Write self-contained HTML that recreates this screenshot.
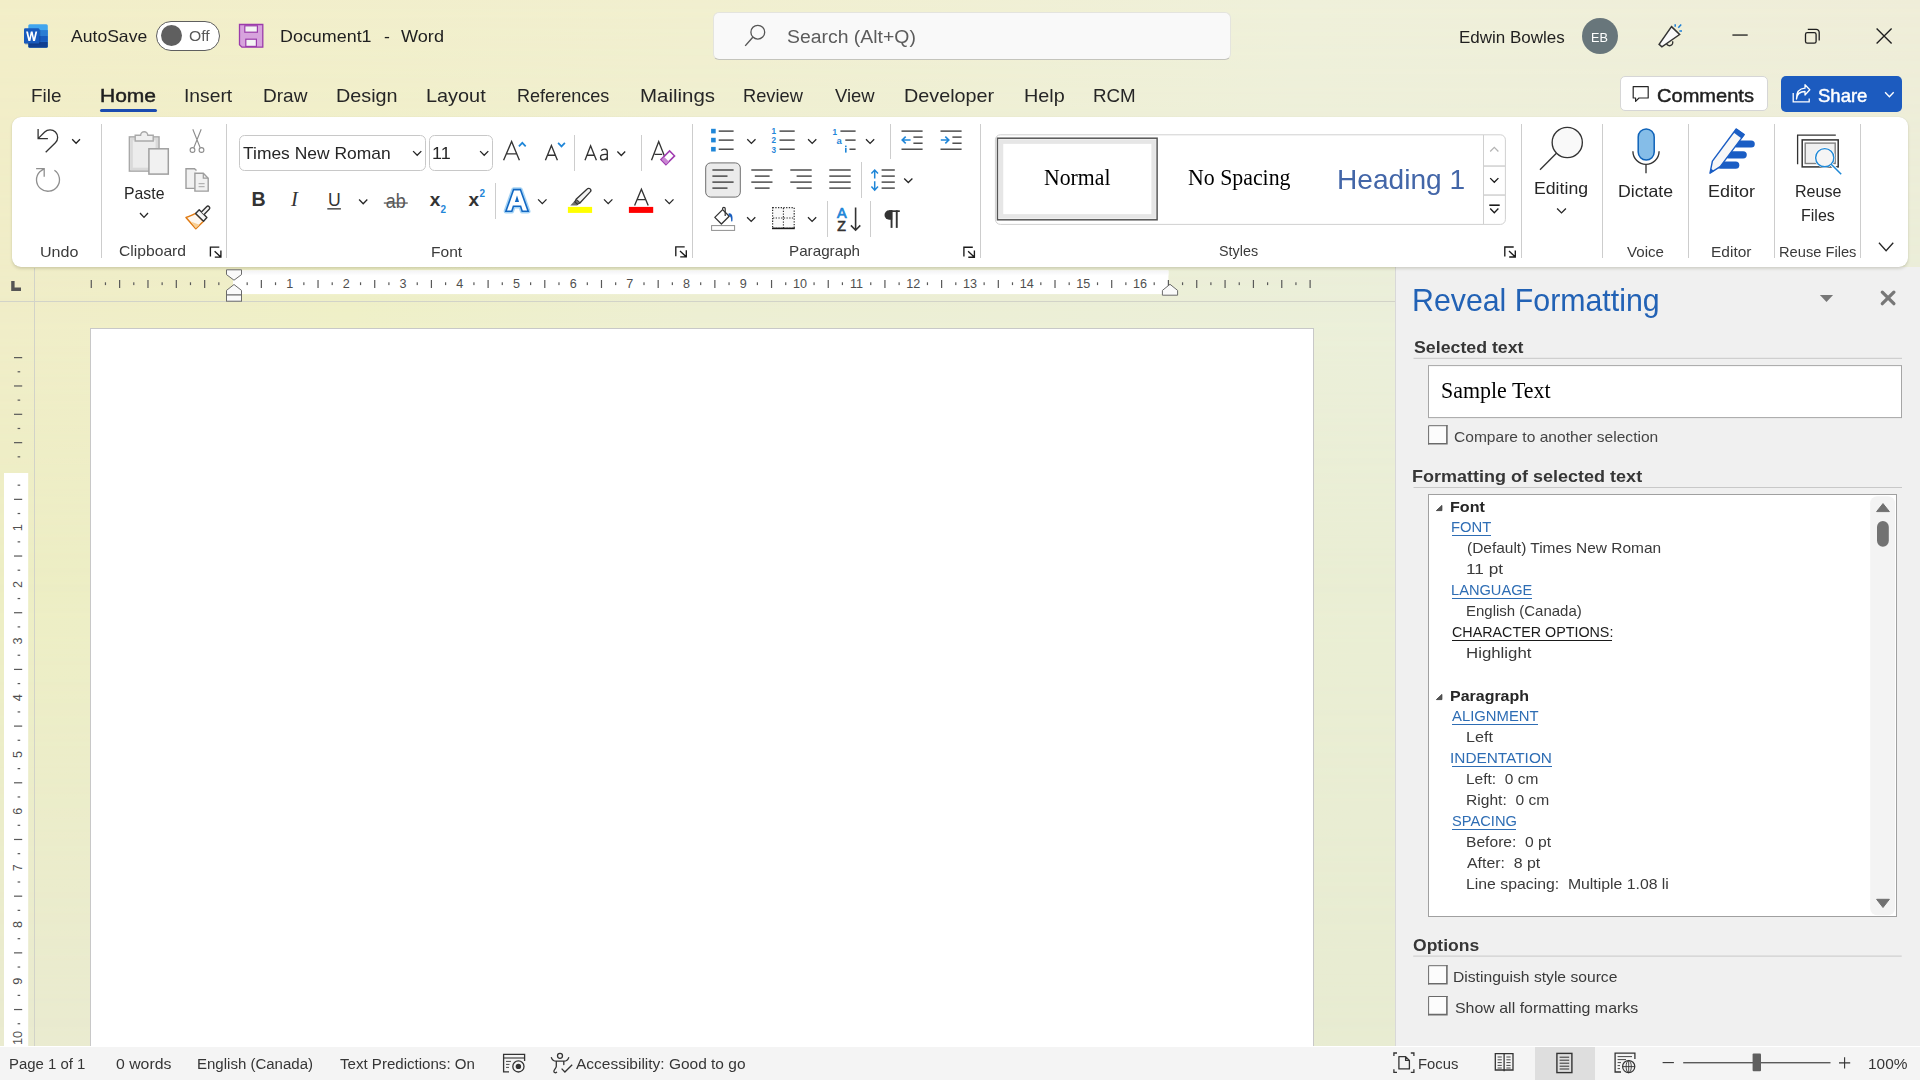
<!DOCTYPE html>
<html><head><meta charset="utf-8"><title>Document1 - Word</title>
<style>
html,body{margin:0;padding:0;width:1920px;height:1080px;overflow:hidden;}
body{position:relative;font-family:"Liberation Sans",sans-serif;
background:linear-gradient(100deg,#f2eec8 0%,#f0efd6 55%,#eeedd9 100%);}
.t{position:absolute;white-space:pre;transform-origin:0 0;}
.abs{position:absolute;}
svg{position:absolute;overflow:visible;}
</style></head><body>
<div class=abs style="left:0;top:0;width:1920px;height:1080px;background:linear-gradient(90deg,#eaebd0 0px,#e9ebd1 700px,#e8ecd2 1360px,#e8ebd2 1920px)"></div>
<div class=abs style="left:0;top:0;width:1920px;height:1080px;background:linear-gradient(90deg,#edeec4 0px,#eceecc 700px,#eaeed4 1360px,#eaeed6 1920px);-webkit-mask-image:linear-gradient(180deg,#000 0px,#000 600px,transparent 1040px)"></div>
<div class=abs style="left:0;top:0;width:1920px;height:1080px;background:linear-gradient(90deg,#f0edc8 0px,#eff0c8 350px,#edefd3 700px,#ebefda 1395px,#ebeed9 1920px);-webkit-mask-image:linear-gradient(180deg,#000 0px,#000 315px,transparent 600px)"></div>
<div class=abs style="left:0;top:0;width:1920px;height:1080px;background:linear-gradient(90deg,#f2eec8 0px,#f1efcf 700px,#eff0da 1300px,#efedd8 1920px);-webkit-mask-image:linear-gradient(180deg,#000 0px,transparent 315px)"></div>
<!-- search box -->
<div class=abs style="left:713px;top:12px;width:518px;height:48px;box-sizing:border-box;background:#f9f9f9;border:1px solid #e4e4de;border-bottom:1.5px solid #c4c4bc;border-radius:6px;"></div>
<!-- avatar -->
<div class=abs style="left:1582px;top:18px;width:36px;height:36px;border-radius:50%;background:#68767b"></div>
<!-- toggle -->
<div class=abs style="left:156px;top:21px;width:64px;height:30px;box-sizing:border-box;border:1px solid #5f5f5f;border-radius:15px;background:#ffffff"></div>
<div class=abs style="left:161px;top:25px;width:21px;height:21px;border-radius:50%;background:#5f5f5f"></div>
<!-- home underline -->
<div class=abs style="left:100px;top:109px;width:57px;height:3px;border-radius:2px;background:#1a4bb0"></div>
<!-- comments / share buttons -->
<div class=abs style="left:1620px;top:76px;width:148px;height:35px;box-sizing:border-box;background:#fff;border:1px solid #d6d6d6;border-radius:5px"></div>
<div class=abs style="left:1781px;top:76px;width:121px;height:36px;background:#1c5bbf;border-radius:5px"></div>
<!-- doc area lines -->
<div class=abs style="left:34px;top:268px;width:1px;height:778px;background:#d2d3c8"></div>
<div class=abs style="left:0px;top:301px;width:1395px;height:1px;background:#d2d3c8"></div>
<!-- page -->
<div class=abs style="left:90px;top:328px;width:1224px;height:720px;box-sizing:border-box;background:#fff;border:1px solid #c8c8c8;border-bottom:none"></div>
<!-- pane -->
<div class=abs style="left:1395px;top:267px;width:525px;height:779px;background:#f0f0f0;border-left:1px solid #d8d8d8;box-sizing:border-box"></div>
<!-- status bar -->
<div class=abs style="left:0;top:1046px;width:1920px;height:34px;background:#f4f4f4;border-top:1px solid #ffffff;box-sizing:border-box"></div>
<!-- ribbon -->
<div class=abs style="left:12px;top:117px;width:1896px;height:150px;background:#ffffff;border-radius:9px;box-shadow:0 2px 3px rgba(60,60,20,0.16),0 0 1px rgba(0,0,0,0.12)"></div>
<svg width="1920" height="1080" viewBox="0 0 1920 1080" style="left:0;top:0"><defs><linearGradient id="rg" x1="0" y1="0" x2="0" y2="1"><stop offset="0" stop-color="#f3f3f5"/><stop offset="1" stop-color="#ffffff"/></linearGradient></defs><rect x="233" y="270.5" width="935.4" height="23.6" fill="#ffffff"/>
<rect x="233" y="270.5" width="935.4" height="5" fill="url(#rg)"/>
<rect x="90.68" y="280" width="1.2" height="8" fill="#595959"/>
<rect x="104.85" y="282.3" width="1.2" height="2.8" fill="#595959"/>
<rect x="119.02" y="280" width="1.2" height="8" fill="#595959"/>
<rect x="133.19" y="282.3" width="1.2" height="2.8" fill="#595959"/>
<rect x="147.37" y="280" width="1.2" height="8" fill="#595959"/>
<rect x="161.54" y="282.3" width="1.2" height="2.8" fill="#595959"/>
<rect x="175.71" y="280" width="1.2" height="8" fill="#595959"/>
<rect x="189.88" y="282.3" width="1.2" height="2.8" fill="#595959"/>
<rect x="204.06" y="280" width="1.2" height="8" fill="#595959"/>
<rect x="218.23" y="282.3" width="1.2" height="2.8" fill="#595959"/>
<rect x="246.57" y="282.3" width="1.2" height="2.8" fill="#595959"/>
<rect x="260.75" y="280" width="1.2" height="8" fill="#595959"/>
<rect x="274.92" y="282.3" width="1.2" height="2.8" fill="#595959"/>
<text x="289.69" y="288.2" text-anchor="middle" font-family="Liberation Sans" font-size="12.6" fill="#4f4f4f">1</text>
<rect x="303.26" y="282.3" width="1.2" height="2.8" fill="#595959"/>
<rect x="317.43" y="280" width="1.2" height="8" fill="#595959"/>
<rect x="331.61" y="282.3" width="1.2" height="2.8" fill="#595959"/>
<text x="346.38" y="288.2" text-anchor="middle" font-family="Liberation Sans" font-size="12.6" fill="#4f4f4f">2</text>
<rect x="359.95" y="282.3" width="1.2" height="2.8" fill="#595959"/>
<rect x="374.12" y="280" width="1.2" height="8" fill="#595959"/>
<rect x="388.30" y="282.3" width="1.2" height="2.8" fill="#595959"/>
<text x="403.07" y="288.2" text-anchor="middle" font-family="Liberation Sans" font-size="12.6" fill="#4f4f4f">3</text>
<rect x="416.64" y="282.3" width="1.2" height="2.8" fill="#595959"/>
<rect x="430.81" y="280" width="1.2" height="8" fill="#595959"/>
<rect x="444.99" y="282.3" width="1.2" height="2.8" fill="#595959"/>
<text x="459.76" y="288.2" text-anchor="middle" font-family="Liberation Sans" font-size="12.6" fill="#4f4f4f">4</text>
<rect x="473.33" y="282.3" width="1.2" height="2.8" fill="#595959"/>
<rect x="487.50" y="280" width="1.2" height="8" fill="#595959"/>
<rect x="501.68" y="282.3" width="1.2" height="2.8" fill="#595959"/>
<text x="516.45" y="288.2" text-anchor="middle" font-family="Liberation Sans" font-size="12.6" fill="#4f4f4f">5</text>
<rect x="530.02" y="282.3" width="1.2" height="2.8" fill="#595959"/>
<rect x="544.19" y="280" width="1.2" height="8" fill="#595959"/>
<rect x="558.37" y="282.3" width="1.2" height="2.8" fill="#595959"/>
<text x="573.14" y="288.2" text-anchor="middle" font-family="Liberation Sans" font-size="12.6" fill="#4f4f4f">6</text>
<rect x="586.71" y="282.3" width="1.2" height="2.8" fill="#595959"/>
<rect x="600.88" y="280" width="1.2" height="8" fill="#595959"/>
<rect x="615.06" y="282.3" width="1.2" height="2.8" fill="#595959"/>
<text x="629.83" y="288.2" text-anchor="middle" font-family="Liberation Sans" font-size="12.6" fill="#4f4f4f">7</text>
<rect x="643.40" y="282.3" width="1.2" height="2.8" fill="#595959"/>
<rect x="657.57" y="280" width="1.2" height="8" fill="#595959"/>
<rect x="671.75" y="282.3" width="1.2" height="2.8" fill="#595959"/>
<text x="686.52" y="288.2" text-anchor="middle" font-family="Liberation Sans" font-size="12.6" fill="#4f4f4f">8</text>
<rect x="700.09" y="282.3" width="1.2" height="2.8" fill="#595959"/>
<rect x="714.26" y="280" width="1.2" height="8" fill="#595959"/>
<rect x="728.44" y="282.3" width="1.2" height="2.8" fill="#595959"/>
<text x="743.21" y="288.2" text-anchor="middle" font-family="Liberation Sans" font-size="12.6" fill="#4f4f4f">9</text>
<rect x="756.78" y="282.3" width="1.2" height="2.8" fill="#595959"/>
<rect x="770.95" y="280" width="1.2" height="8" fill="#595959"/>
<rect x="785.13" y="282.3" width="1.2" height="2.8" fill="#595959"/>
<text x="799.90" y="288.2" text-anchor="middle" font-family="Liberation Sans" font-size="12.6" fill="#4f4f4f">10</text>
<rect x="813.47" y="282.3" width="1.2" height="2.8" fill="#595959"/>
<rect x="827.64" y="280" width="1.2" height="8" fill="#595959"/>
<rect x="841.82" y="282.3" width="1.2" height="2.8" fill="#595959"/>
<text x="856.59" y="288.2" text-anchor="middle" font-family="Liberation Sans" font-size="12.6" fill="#4f4f4f">11</text>
<rect x="870.16" y="282.3" width="1.2" height="2.8" fill="#595959"/>
<rect x="884.33" y="280" width="1.2" height="8" fill="#595959"/>
<rect x="898.51" y="282.3" width="1.2" height="2.8" fill="#595959"/>
<text x="913.28" y="288.2" text-anchor="middle" font-family="Liberation Sans" font-size="12.6" fill="#4f4f4f">12</text>
<rect x="926.85" y="282.3" width="1.2" height="2.8" fill="#595959"/>
<rect x="941.02" y="280" width="1.2" height="8" fill="#595959"/>
<rect x="955.20" y="282.3" width="1.2" height="2.8" fill="#595959"/>
<text x="969.97" y="288.2" text-anchor="middle" font-family="Liberation Sans" font-size="12.6" fill="#4f4f4f">13</text>
<rect x="983.54" y="282.3" width="1.2" height="2.8" fill="#595959"/>
<rect x="997.71" y="280" width="1.2" height="8" fill="#595959"/>
<rect x="1011.89" y="282.3" width="1.2" height="2.8" fill="#595959"/>
<text x="1026.66" y="288.2" text-anchor="middle" font-family="Liberation Sans" font-size="12.6" fill="#4f4f4f">14</text>
<rect x="1040.23" y="282.3" width="1.2" height="2.8" fill="#595959"/>
<rect x="1054.41" y="280" width="1.2" height="8" fill="#595959"/>
<rect x="1068.58" y="282.3" width="1.2" height="2.8" fill="#595959"/>
<text x="1083.35" y="288.2" text-anchor="middle" font-family="Liberation Sans" font-size="12.6" fill="#4f4f4f">15</text>
<rect x="1096.92" y="282.3" width="1.2" height="2.8" fill="#595959"/>
<rect x="1111.10" y="280" width="1.2" height="8" fill="#595959"/>
<rect x="1125.27" y="282.3" width="1.2" height="2.8" fill="#595959"/>
<text x="1140.04" y="288.2" text-anchor="middle" font-family="Liberation Sans" font-size="12.6" fill="#4f4f4f">16</text>
<rect x="1153.61" y="282.3" width="1.2" height="2.8" fill="#595959"/>
<rect x="1167.79" y="280" width="1.2" height="8" fill="#595959"/>
<rect x="1181.96" y="282.3" width="1.2" height="2.8" fill="#595959"/>
<rect x="1196.13" y="280" width="1.2" height="8" fill="#595959"/>
<rect x="1210.30" y="282.3" width="1.2" height="2.8" fill="#595959"/>
<rect x="1224.47" y="280" width="1.2" height="8" fill="#595959"/>
<rect x="1238.65" y="282.3" width="1.2" height="2.8" fill="#595959"/>
<rect x="1252.82" y="280" width="1.2" height="8" fill="#595959"/>
<rect x="1266.99" y="282.3" width="1.2" height="2.8" fill="#595959"/>
<rect x="1281.16" y="280" width="1.2" height="8" fill="#595959"/>
<rect x="1295.34" y="282.3" width="1.2" height="2.8" fill="#595959"/>
<rect x="1309.51" y="280" width="1.2" height="8" fill="#595959"/>
<path d="M11.2,281 H14.6 V287.6 H21 V291 H11.2Z" fill="#555"/>
<path d="M226.5,269.8 H241.5 V274.6 L234,280.2 L226.5,274.6Z" fill="#fafafa" stroke="#6b6b6b" stroke-width="1"/>
<path d="M234,284.5 L241.5,290.4 V295 H226.5 V290.4Z" fill="#fafafa" stroke="#6b6b6b" stroke-width="1"/>
<rect x="226.5" y="295" width="15" height="6.2" fill="#fafafa" stroke="#6b6b6b" stroke-width="1"/>
<path d="M1170,284.3 L1177.6,290.4 V295.2 H1162.4 V290.4Z" fill="#fafafa" stroke="#6b6b6b" stroke-width="1"/>
<rect x="4" y="473" width="24.2" height="573" fill="#ffffff"/>
<rect x="14" y="357.02" width="8.2" height="1.2" fill="#595959"/>
<rect x="17.6" y="371.19" width="2.6" height="1.2" fill="#595959"/>
<rect x="14" y="385.37" width="8.2" height="1.2" fill="#595959"/>
<rect x="17.6" y="399.54" width="2.6" height="1.2" fill="#595959"/>
<rect x="14" y="413.71" width="8.2" height="1.2" fill="#595959"/>
<rect x="17.6" y="427.88" width="2.6" height="1.2" fill="#595959"/>
<rect x="14" y="442.05" width="8.2" height="1.2" fill="#595959"/>
<rect x="17.6" y="456.23" width="2.6" height="1.2" fill="#595959"/>
<rect x="17.6" y="484.57" width="2.6" height="1.2" fill="#595959"/>
<rect x="14" y="498.75" width="8.2" height="1.2" fill="#595959"/>
<rect x="17.6" y="512.92" width="2.6" height="1.2" fill="#595959"/>
<text x="0" y="0" text-anchor="middle" font-family="Liberation Sans" font-size="12.6" fill="#4f4f4f" transform="translate(22.2 527.69) rotate(-90)">1</text>
<rect x="17.6" y="541.26" width="2.6" height="1.2" fill="#595959"/>
<rect x="14" y="555.43" width="8.2" height="1.2" fill="#595959"/>
<rect x="17.6" y="569.61" width="2.6" height="1.2" fill="#595959"/>
<text x="0" y="0" text-anchor="middle" font-family="Liberation Sans" font-size="12.6" fill="#4f4f4f" transform="translate(22.2 584.38) rotate(-90)">2</text>
<rect x="17.6" y="597.95" width="2.6" height="1.2" fill="#595959"/>
<rect x="14" y="612.12" width="8.2" height="1.2" fill="#595959"/>
<rect x="17.6" y="626.30" width="2.6" height="1.2" fill="#595959"/>
<text x="0" y="0" text-anchor="middle" font-family="Liberation Sans" font-size="12.6" fill="#4f4f4f" transform="translate(22.2 641.07) rotate(-90)">3</text>
<rect x="17.6" y="654.64" width="2.6" height="1.2" fill="#595959"/>
<rect x="14" y="668.81" width="8.2" height="1.2" fill="#595959"/>
<rect x="17.6" y="682.99" width="2.6" height="1.2" fill="#595959"/>
<text x="0" y="0" text-anchor="middle" font-family="Liberation Sans" font-size="12.6" fill="#4f4f4f" transform="translate(22.2 697.76) rotate(-90)">4</text>
<rect x="17.6" y="711.33" width="2.6" height="1.2" fill="#595959"/>
<rect x="14" y="725.50" width="8.2" height="1.2" fill="#595959"/>
<rect x="17.6" y="739.68" width="2.6" height="1.2" fill="#595959"/>
<text x="0" y="0" text-anchor="middle" font-family="Liberation Sans" font-size="12.6" fill="#4f4f4f" transform="translate(22.2 754.45) rotate(-90)">5</text>
<rect x="17.6" y="768.02" width="2.6" height="1.2" fill="#595959"/>
<rect x="14" y="782.19" width="8.2" height="1.2" fill="#595959"/>
<rect x="17.6" y="796.37" width="2.6" height="1.2" fill="#595959"/>
<text x="0" y="0" text-anchor="middle" font-family="Liberation Sans" font-size="12.6" fill="#4f4f4f" transform="translate(22.2 811.14) rotate(-90)">6</text>
<rect x="17.6" y="824.71" width="2.6" height="1.2" fill="#595959"/>
<rect x="14" y="838.88" width="8.2" height="1.2" fill="#595959"/>
<rect x="17.6" y="853.06" width="2.6" height="1.2" fill="#595959"/>
<text x="0" y="0" text-anchor="middle" font-family="Liberation Sans" font-size="12.6" fill="#4f4f4f" transform="translate(22.2 867.83) rotate(-90)">7</text>
<rect x="17.6" y="881.40" width="2.6" height="1.2" fill="#595959"/>
<rect x="14" y="895.57" width="8.2" height="1.2" fill="#595959"/>
<rect x="17.6" y="909.75" width="2.6" height="1.2" fill="#595959"/>
<text x="0" y="0" text-anchor="middle" font-family="Liberation Sans" font-size="12.6" fill="#4f4f4f" transform="translate(22.2 924.52) rotate(-90)">8</text>
<rect x="17.6" y="938.09" width="2.6" height="1.2" fill="#595959"/>
<rect x="14" y="952.26" width="8.2" height="1.2" fill="#595959"/>
<rect x="17.6" y="966.44" width="2.6" height="1.2" fill="#595959"/>
<text x="0" y="0" text-anchor="middle" font-family="Liberation Sans" font-size="12.6" fill="#4f4f4f" transform="translate(22.2 981.21) rotate(-90)">9</text>
<rect x="17.6" y="994.78" width="2.6" height="1.2" fill="#595959"/>
<rect x="14" y="1008.95" width="8.2" height="1.2" fill="#595959"/>
<rect x="17.6" y="1023.13" width="2.6" height="1.2" fill="#595959"/>
<text x="0" y="0" text-anchor="middle" font-family="Liberation Sans" font-size="12.6" fill="#4f4f4f" transform="translate(22.2 1037.90) rotate(-90)">10</text></svg>
<svg width="1920" height="1080" viewBox="0 0 1920 1080" style="left:0;top:0"><rect x="28.3" y="24.2" width="19.5" height="23.5" rx="1.5" fill="#41a5ee"/>
<rect x="28.3" y="30.1" width="19.5" height="5.9" fill="#2b7cd3"/>
<rect x="28.3" y="36" width="19.5" height="5.9" fill="#185abd"/>
<path d="M28.3,41.9 H47.8 V46.2 a1.5,1.5 0 0 1 -1.5,1.5 H29.8 a1.5,1.5 0 0 1 -1.5,-1.5Z" fill="#103f91"/>
<rect x="25" y="29.3" width="15.3" height="15.3" rx="1.2" fill="#0b2d6b" opacity="0.35"/>
<rect x="24" y="28.3" width="15.3" height="15.3" rx="1.2" fill="#185abd"/>
<path d="M26.1,31.4 L28.4,40.9 L30.4,40.9 L31.7,34.8 L33,40.9 L35,40.9 L37.2,31.4 L35.4,31.4 L34,37.9 L32.6,31.4 L30.8,31.4 L29.4,37.9 L28,31.4Z" fill="#ffffff"/>
<path d="M239.5,24.5 H262.8 V47.2 H241.9 L239.5,44.8Z" fill="#d7a3dd" stroke="#9b3bab" stroke-width="1.3"/>
<rect x="244.8" y="25.8" width="12.6" height="6.4" fill="#f4f4f4" stroke="#9b3bab" stroke-width="1.2"/>
<rect x="245.8" y="39.2" width="10.6" height="7.2" fill="#f4f4f4" stroke="#9b3bab" stroke-width="1.2"/>
<circle cx="757.8" cy="32.2" r="6.9" fill="none" stroke="#555" stroke-width="1.3"/>
<path d="M752.8,37.2 L745.2,45.9" stroke="#555" stroke-width="1.4"/>
<path d="M1671.5,26.6 L1679.6,34.5 L1661.9,46.9 L1659.1,44.3Z" fill="#fafafa" stroke="#333" stroke-width="1.5" stroke-linejoin="miter"/>
<path d="M1666.6,43.7 A3,3 0 0 0 1672.5,41.3" fill="none" stroke="#333" stroke-width="1.4"/>
<path d="M1675.2,24.2 V26.8 M1678.3,27.8 L1681.2,24.6 M1679.4,31 H1682" stroke="#1e7fd6" stroke-width="1.5"/>
<rect x="1732.4" y="34.4" width="15.3" height="1.3" fill="#1f1f1f"/>
<rect x="1805.5" y="32.6" width="10.6" height="10.6" rx="1.8" fill="none" stroke="#1f1f1f" stroke-width="1.3"/>
<path d="M1807.8,29.4 H1816.2 A3,3 0 0 1 1819.2,32.4 V40.6" fill="none" stroke="#1f1f1f" stroke-width="1.3"/>
<path d="M1876.6,28.6 L1891.6,43.4 M1891.6,28.6 L1876.6,43.4" stroke="#1f1f1f" stroke-width="1.35"/>
<path d="M1633.2,86.6 H1648.2 V98 H1639 L1635.6,101.4 V98 H1633.2Z" fill="none" stroke="#262626" stroke-width="1.2" stroke-linejoin="round"/>
<path d="M1793.2,93 V101.8 H1809.2 V98.5" fill="none" stroke="#fff" stroke-width="1.3"/>
<path d="M1796.5,99 C1797,93.5 1801,91.5 1805,91.5 V95 L1809.8,89.7 L1805,84.8 V88.2 C1799.5,88.5 1796.3,92.5 1796.5,99Z" fill="none" stroke="#fff" stroke-width="1.3" stroke-linejoin="round"/>
<path d="M1885.10,92.30 L1889.40,96.70 L1893.70,92.30" fill="none" stroke="#fff" stroke-width="1.4"/>
<path d="M38.1,129.1 V138.6 H47.9 M38.6,138.1 L44.7,132 A7.6,7.6 0 0 1 55.4,142.8 L45.7,152.3" fill="none" stroke="#333333" stroke-width="1.3"/>
<path d="M72.20,139.30 L76.10,143.30 L80.00,139.30" fill="none" stroke="#222" stroke-width="1.3"/>
<path d="M54.4,170.2 A11.5,11.5 0 1 1 39.8,171.7 L44.2,168.6 M36.1,168.6 H44.2 V176.7" fill="none" stroke="#8f8f8f" stroke-width="1.3"/>
<rect x="101" y="124" width="1" height="134" fill="#cdcdcd"/>
<rect x="129.4" y="136.9" width="29.6" height="34.2" fill="#ececec" stroke="#a9a9a9" stroke-width="1.5"/>
<rect x="131.6" y="139.1" width="25.2" height="29.8" fill="none" stroke="#d9d9d9" stroke-width="2.4"/>
<path d="M135.2,141 V135.3 H140.6 A3.6,3.6 0 0 1 147.8,135.3 H153.2 V141Z" fill="#f0f0f0" stroke="#a9a9a9" stroke-width="1.4"/>
<rect x="148.9" y="148.8" width="19.4" height="25.3" fill="#f1f1f1" stroke="#9f9f9f" stroke-width="1.5"/>
<path d="M140.00,213.00 L144.00,217.40 L148.00,213.00" fill="none" stroke="#262626" stroke-width="1.3"/>
<path d="M192.8,129.2 L200.2,147.8 M201.2,129.2 L193.8,147.8" stroke="#8c8c8c" stroke-width="1.1"/>
<circle cx="192.5" cy="150" r="2.4" fill="#fff" stroke="#8c8c8c" stroke-width="1.1"/><circle cx="201.5" cy="150" r="2.4" fill="#fff" stroke="#8c8c8c" stroke-width="1.1"/>
<path d="M194.8,188.4 H186 V168.8 H194.5 L196.5,170.6" fill="#f1f1f1" stroke="#9d9d9d" stroke-width="1.4"/>
<path d="M194.9,173.3 H203.3 L208.2,178.2 V191.1 H194.9Z" fill="#f1f1f1" stroke="#9d9d9d" stroke-width="1.4"/>
<path d="M203.3,173.3 V178.2 H208.2" fill="none" stroke="#9d9d9d" stroke-width="1.2"/>
<path d="M198.6,183.7 H204.6 M198.6,186.7 H204.6" stroke="#9d9d9d" stroke-width="0.9"/>
<path d="M186,217.5 C189.5,216.5 192.5,214.8 195.6,213.4 L203.5,221.2 L195.8,228.8Z" fill="#fdf6ee" stroke="#e07a12" stroke-width="1.5" stroke-linejoin="round"/>
<path d="M190.6,221.6 L199.6,224.8 L195.8,228.2Z" fill="#f8cf94"/>
<path d="M195.6,213.4 L199.2,209.8 L206.9,217.5 L203.5,221.2Z" fill="#f5f5f5" stroke="#333" stroke-width="1.4" stroke-linejoin="round"/>
<path d="M201.4,211.9 L206.6,206.7 A1.8,1.8 0 0 1 209.2,209.3 L204.1,214.5" fill="#f5f5f5" stroke="#333" stroke-width="1.4"/>
<path d="M210.40,256.50 V247.10 H219.30 M214.60,251.20 L220.70,256.90 M220.90,250.50 V257.10 H214.80" fill="none" stroke="#1a1a1a" stroke-width="1.35"/>
<rect x="226" y="124" width="1" height="134" fill="#cdcdcd"/>
<rect x="239.5" y="135.5" width="186" height="35" rx="5" fill="#fff" stroke="#c8c8c8" stroke-width="1"/>
<path d="M413.10,151.10 L417.20,155.30 L421.30,151.10" fill="none" stroke="#262626" stroke-width="1.3"/>
<rect x="429.5" y="135.5" width="63" height="35" rx="5" fill="#fff" stroke="#c8c8c8" stroke-width="1"/>
<path d="M480.10,151.10 L484.20,155.30 L488.30,151.10" fill="none" stroke="#262626" stroke-width="1.3"/>
<path d="M503.6,160.3 L511.6,141.4 L519.4,160.3 M506.6,153.9 H516.5" fill="none" stroke="#333333" stroke-width="1.35"/>
<path d="M518.9,146.4 L522.3,142.8 L525.7,146.4" fill="none" stroke="#1f86d8" stroke-width="1.7"/>
<path d="M545.4,160.3 L551.4,145.6 L557.4,160.3 M547.7,155.2 H555.1" fill="none" stroke="#333333" stroke-width="1.35"/>
<path d="M558.1,142.8 L561.5,146.4 L564.9,142.8" fill="none" stroke="#1f86d8" stroke-width="1.7"/>
<rect x="574" y="135" width="1" height="36" fill="#cdcdcd"/>
<path d="M585,160.3 L590.6,145.8 L596.4,160.3 M587.2,155.2 H594.2" fill="none" stroke="#333333" stroke-width="1.35"/>
<path d="M601.3,150.6 C603,148.3 607.3,148.6 607.3,151.8 V160.3 M607.3,154.5 C602.5,153.8 600.3,155.2 600.5,157.6 C600.8,160.8 605.8,160.6 607.3,157.3" fill="none" stroke="#333333" stroke-width="1.35"/>
<path d="M617.40,151.50 L621.30,155.50 L625.20,151.50" fill="none" stroke="#262626" stroke-width="1.3"/>
<rect x="641" y="135" width="1" height="36" fill="#cdcdcd"/>
<path d="M651.5,160.3 L658.7,141.6 L665.7,159.2 M654.7,154.3 H662.2" fill="none" stroke="#333333" stroke-width="1.35"/>
<path d="M660.9,159.6 L669.6,150.9 L674.6,155.9 L665.9,164.6Z" fill="#fff" stroke="#a03cb0" stroke-width="1.5"/>
<path d="M661.5,159.6 L664.2,156.9 L668.9,161.6 L666.2,164.3Z" fill="#c986d3"/>
<text x="251.5" y="206.4" font-family="Liberation Sans" font-weight="700" font-size="19.6" fill="#333333">B</text>
<text x="291" y="206.4" font-family="Liberation Serif" font-style="italic" font-size="20.5" fill="#333333">I</text>
<text x="328" y="205.8" font-family="Liberation Sans" font-size="19.2" fill="#333333" transform="translate(328 205.8) scale(0.92 1) translate(-328 -205.8)">U</text>
<rect x="327.3" y="208.2" width="13.6" height="1.3" fill="#333333"/>
<path d="M359.10,199.50 L363.20,203.70 L367.30,199.50" fill="none" stroke="#262626" stroke-width="1.3"/>
<text x="385.8" y="208.2" font-family="Liberation Sans" font-size="19.5" fill="#595959" transform="translate(385.8 208) scale(0.92 1) translate(-385.8 -208)">ab</text>
<rect x="383.8" y="202.4" width="24" height="1.3" fill="#595959"/>
<text x="429.8" y="206.4" font-family="Liberation Sans" font-weight="700" font-size="19" fill="#333333">x</text>
<text x="440.5" y="212.5" font-family="Liberation Sans" font-weight="700" font-size="10" fill="#1f86d8">2</text>
<text x="468.5" y="206.4" font-family="Liberation Sans" font-weight="700" font-size="19" fill="#333333">x</text>
<text x="479.5" y="196.5" font-family="Liberation Sans" font-weight="700" font-size="10" fill="#1f86d8">2</text>
<rect x="495" y="183" width="1" height="36" fill="#cdcdcd"/>
<path d="M505.9,211.2 L513.6,189.6 H520.4 L528.2,211.2 H522.2 L520.6,206.3 H513.4 L511.8,211.2Z" fill="#fff" stroke="#a6d3f4" stroke-width="4.6" stroke-linejoin="round"/>
<path d="M505.9,211.2 L513.6,189.6 H520.4 L528.2,211.2 H522.2 L520.6,206.3 H513.4 L511.8,211.2Z" fill="#fff" stroke="#1268c3" stroke-width="1.6" stroke-linejoin="miter"/>
<path d="M514.9,201.9 L517,195.6 L519.1,201.9Z" fill="#1268c3"/>
<path d="M538.10,199.35 L542.30,203.65 L546.50,199.35" fill="none" stroke="#262626" stroke-width="1.3"/>
<rect x="567.9" y="206.9" width="24.2" height="6" fill="#ffff00"/>
<path d="M570.3,205.4 L575.6,199.7 L578.4,202.5 L577.3,205.4Z" fill="#6d6d6d"/>
<path d="M576.1,199.2 L587.2,188.9 A2.1,2.1 0 0 1 590.2,191.9 L579.9,203 Z" fill="#f2f2f2" stroke="#333" stroke-width="1.3" stroke-linejoin="round"/>
<path d="M576.3,199.4 L574.8,201.8 L577.6,204.4 L579.8,202.9" fill="#6d6d6d" stroke="#333" stroke-width="1.1"/>
<path d="M604.00,199.35 L608.20,203.65 L612.40,199.35" fill="none" stroke="#262626" stroke-width="1.3"/>
<rect x="628.9" y="206.9" width="24.3" height="6" fill="#ff0000"/>
<path d="M634.6,205.5 L641.4,189.3 L648.2,205.5 M637,199.6 H645.8" fill="none" stroke="#333333" stroke-width="1.35"/>
<path d="M665.10,199.35 L669.30,203.65 L673.50,199.35" fill="none" stroke="#262626" stroke-width="1.3"/>
<path d="M675.80,256.30 V246.90 H684.70 M680.00,251.00 L686.10,256.70 M686.30,250.30 V256.90 H680.20" fill="none" stroke="#1a1a1a" stroke-width="1.35"/>
<rect x="692" y="124" width="1" height="134" fill="#cdcdcd"/>
<rect x="711.1" y="128.8" width="4.6" height="4.6" fill="#1f86d8"/>
<rect x="718.7" y="130.45" width="14.9" height="1.3" fill="#333333"/>
<rect x="711.1" y="137.8" width="4.6" height="4.6" fill="#1f86d8"/>
<rect x="718.7" y="139.45" width="14.9" height="1.3" fill="#333333"/>
<rect x="711.1" y="146.9" width="4.6" height="4.6" fill="#1f86d8"/>
<rect x="718.7" y="148.55" width="14.9" height="1.3" fill="#333333"/>
<path d="M747.30,139.25 L751.40,143.35 L755.50,139.25" fill="none" stroke="#262626" stroke-width="1.3"/>
<text x="771.6" y="134.4" font-family="Liberation Sans" font-weight="700" font-size="8.2" fill="#1f86d8">1</text>
<rect x="779.5" y="130.45" width="15.2" height="1.3" fill="#333333"/>
<text x="771.6" y="143.4" font-family="Liberation Sans" font-weight="700" font-size="8.2" fill="#1f86d8">2</text>
<rect x="779.5" y="139.45" width="15.2" height="1.3" fill="#333333"/>
<text x="771.6" y="152.5" font-family="Liberation Sans" font-weight="700" font-size="8.2" fill="#1f86d8">3</text>
<rect x="779.5" y="148.55" width="15.2" height="1.3" fill="#333333"/>
<path d="M808.10,139.25 L812.20,143.35 L816.30,139.25" fill="none" stroke="#262626" stroke-width="1.3"/>
<text x="832.6" y="134.6" font-family="Liberation Sans" font-weight="700" font-size="8.2" fill="#1f86d8">1</text>
<rect x="840.4" y="130.45" width="15.2" height="1.3" fill="#333333"/>
<text x="836.6" y="144.2" font-family="Liberation Sans" font-weight="700" font-size="9.5" fill="#1f86d8">a</text>
<rect x="845.3" y="139.45" width="10.3" height="1.3" fill="#333333"/>
<rect x="845" y="145.6" width="1.6" height="1.6" fill="#1f86d8"/><rect x="845" y="148" width="1.6" height="4.6" fill="#1f86d8"/>
<rect x="849.5" y="148.55" width="6.1" height="1.3" fill="#333333"/>
<path d="M866.00,139.25 L870.10,143.35 L874.20,139.25" fill="none" stroke="#262626" stroke-width="1.3"/>
<rect x="890" y="124" width="1" height="35" fill="#cdcdcd"/>
<rect x="901.5" y="130.45" width="21.1" height="1.3" fill="#333333"/><rect x="901.5" y="148.55" width="21.1" height="1.3" fill="#333333"/>
<rect x="913.4" y="136.45" width="9.2" height="1.3" fill="#333333"/><rect x="913.4" y="142.55" width="9.2" height="1.3" fill="#333333"/>
<rect x="940.5" y="130.45" width="21.1" height="1.3" fill="#333333"/><rect x="940.5" y="148.55" width="21.1" height="1.3" fill="#333333"/>
<rect x="952.4" y="136.45" width="9.2" height="1.3" fill="#333333"/><rect x="952.4" y="142.55" width="9.2" height="1.3" fill="#333333"/>
<path d="M910.6,140 H902.4 M905.7,136.6 L902.2,140 L905.7,143.4" fill="none" stroke="#1f86d8" stroke-width="1.6"/>
<path d="M940.8,140 H948.6 M945.3,136.6 L948.8,140 L945.3,143.4" fill="none" stroke="#1f86d8" stroke-width="1.6"/>
<rect x="980" y="124" width="1" height="134" fill="#cdcdcd"/>
<rect x="705.7" y="162.9" width="34.6" height="34.2" rx="5" fill="#ebebeb" stroke="#6e6e6e" stroke-width="1"/>
<rect x="712.4" y="169.35" width="21.2" height="1.3" fill="#333333"/>
<rect x="712.4" y="175.45" width="15.1" height="1.3" fill="#333333"/>
<rect x="712.4" y="181.45" width="21.2" height="1.3" fill="#333333"/>
<rect x="712.4" y="187.45" width="15.1" height="1.3" fill="#333333"/>
<rect x="751.3" y="169.35" width="21.2" height="1.3" fill="#333333"/>
<rect x="754.8" y="175.45" width="14.8" height="1.3" fill="#333333"/>
<rect x="751.3" y="181.45" width="21.2" height="1.3" fill="#333333"/>
<rect x="754.8" y="187.45" width="14.8" height="1.3" fill="#333333"/>
<rect x="790.3" y="169.35" width="21.4" height="1.3" fill="#333333"/>
<rect x="796.6" y="175.45" width="15.1" height="1.3" fill="#333333"/>
<rect x="790.3" y="181.45" width="21.4" height="1.3" fill="#333333"/>
<rect x="796.6" y="187.45" width="15.1" height="1.3" fill="#333333"/>
<rect x="829.3" y="169.35" width="21.4" height="1.3" fill="#333333"/>
<rect x="829.3" y="175.45" width="21.4" height="1.3" fill="#333333"/>
<rect x="829.3" y="181.45" width="21.4" height="1.3" fill="#333333"/>
<rect x="829.3" y="187.45" width="21.4" height="1.3" fill="#333333"/>
<rect x="861" y="162" width="1" height="36" fill="#cdcdcd"/>
<path d="M874.7,170.5 V178.6 M871.4,173.4 L874.7,170 L878,173.4 M874.7,181.2 V189.6 M871.4,186.6 L874.7,190.2 L878,186.6" fill="none" stroke="#1f86d8" stroke-width="1.5"/>
<rect x="881.6" y="169.35" width="13.2" height="1.3" fill="#333333"/>
<rect x="881.6" y="175.45" width="13.2" height="1.3" fill="#333333"/>
<rect x="881.6" y="181.45" width="13.2" height="1.3" fill="#333333"/>
<rect x="881.6" y="187.45" width="13.2" height="1.3" fill="#333333"/>
<path d="M904.20,178.45 L908.30,182.55 L912.40,178.45" fill="none" stroke="#262626" stroke-width="1.3"/>
<rect x="711.6" y="225.6" width="23" height="4.8" fill="#fff" stroke="#8f8f8f" stroke-width="1"/>
<path d="M714.8,217.4 L722.6,209.6 L729.2,216.2 L721.4,224Z" fill="#fff" stroke="#333333" stroke-width="1.3" stroke-linejoin="round"/>
<path d="M722.6,209.6 V208.6 A1.3,1.3 0 0 1 725.2,208.6 V216" fill="none" stroke="#333333" stroke-width="1.2"/>
<path d="M728.6,213.4 C731.5,212.6 733.2,215.5 732.4,221.2 L731.2,221.4 C731.2,218 730.5,215.8 728.6,215.6Z" fill="#1a5fbf"/>
<path d="M747.10,217.25 L751.20,221.35 L755.30,217.25" fill="none" stroke="#262626" stroke-width="1.3"/>
<rect x="772.6" y="207.7" width="21.6" height="20.6" fill="#f9f9f9" stroke="#2e2e2e" stroke-width="1.2" stroke-dasharray="1.3 1.4"/>
<path d="M783.4,208 V228 M773,218 H794" stroke="#2e2e2e" stroke-width="1.1" stroke-dasharray="1.3 1.4"/>
<rect x="772" y="227.6" width="22.8" height="1.6" fill="#1a1a1a"/>
<path d="M808.00,217.25 L812.10,221.35 L816.20,217.25" fill="none" stroke="#262626" stroke-width="1.3"/>
<rect x="827" y="201" width="1" height="36" fill="#cdcdcd"/>
<text x="836.9" y="217.7" font-family="Liberation Sans" font-size="14.5" fill="#1f86d8" stroke="#1f86d8" stroke-width="0.7">A</text>
<text x="837.3" y="230.6" font-family="Liberation Sans" font-size="14.2" fill="#333333" stroke="#333333" stroke-width="0.6">Z</text>
<path d="M855.6,207.4 V230 M850.9,225.4 L855.6,230.2 L860.3,225.4" fill="none" stroke="#333333" stroke-width="1.6"/>
<rect x="870" y="201" width="1" height="36" fill="#cdcdcd"/>
<path d="M892.2,210.3 H889.2 A4.7,4.7 0 0 0 889.2,219.7 H892.2Z" fill="#333333"/>
<rect x="890.6" y="210.3" width="1.9" height="17.6" fill="#333333"/><rect x="895.8" y="210.3" width="1.9" height="17.6" fill="#333333"/><rect x="889" y="210.3" width="10.8" height="1.7" fill="#333333"/>
<path d="M963.90,256.60 V247.20 H972.80 M968.10,251.30 L974.20,257.00 M974.40,250.60 V257.20 H968.30" fill="none" stroke="#1a1a1a" stroke-width="1.35"/>
<rect x="995.4" y="134.8" width="510" height="89.6" rx="5" fill="#fff" stroke="#d0d0d0" stroke-width="1"/>
<rect x="997.5" y="138.2" width="159.6" height="81.6" fill="#fff" stroke="#555" stroke-width="1.5"/>
<rect x="1001" y="141.6" width="152.6" height="74.8" fill="none" stroke="#e6e6e6" stroke-width="4.5"/>
<rect x="1483" y="135" width="1" height="89" fill="#d0d0d0"/>
<rect x="1483.5" y="165.3" width="21.6" height="1.5" fill="#d0d0d0"/><rect x="1483.5" y="194.3" width="21.6" height="1.5" fill="#d0d0d0"/>
<path d="M1490.20,151.45 L1494.30,147.35 L1498.40,151.45" fill="none" stroke="#b4b4b4" stroke-width="1.3"/>
<path d="M1490.20,178.10 L1494.30,182.30 L1498.40,178.10" fill="none" stroke="#1a1a1a" stroke-width="1.3"/>
<rect x="1489.3" y="204.4" width="10.4" height="1.6" fill="#1a1a1a"/>
<path d="M1490.20,208.50 L1494.30,212.70 L1498.40,208.50" fill="none" stroke="#1a1a1a" stroke-width="1.3"/>
<path d="M1504.80,256.40 V247.00 H1513.70 M1509.00,251.10 L1515.10,256.80 M1515.30,250.40 V257.00 H1509.20" fill="none" stroke="#1a1a1a" stroke-width="1.35"/>
<rect x="1521" y="124" width="1" height="134" fill="#cdcdcd"/>
<circle cx="1567.25" cy="142.5" r="15.1" fill="#f9f9f9" stroke="#333333" stroke-width="1.35"/>
<path d="M1556.4,153.3 L1540,169.7" stroke="#333333" stroke-width="1.35"/>
<path d="M1557.10,208.50 L1561.50,212.90 L1565.90,208.50" fill="none" stroke="#262626" stroke-width="1.3"/>
<rect x="1602" y="124" width="1" height="134" fill="#cdcdcd"/>
<rect x="1638.2" y="129" width="16" height="31" rx="8" fill="#85bde8" stroke="#0f62b8" stroke-width="1.5"/>
<path d="M1632.9,151.3 A13.1,13.1 0 0 0 1659.1,151.3 M1646,164.5 V173.3" fill="none" stroke="#333333" stroke-width="1.35"/>
<rect x="1688" y="124" width="1" height="134" fill="#cdcdcd"/>
<rect x="1733" y="140.4" width="21.8" height="7.2" rx="3.6" fill="#1a5dc4"/>
<rect x="1725" y="151.2" width="21.8" height="7.2" rx="3.6" fill="#1a5dc4"/>
<rect x="1717" y="161.5" width="22.3" height="7.3" rx="3.6" fill="#1a5dc4"/>
<path d="M1710,173.2 L1712.4,161.2 L1736.2,129 L1744.2,134.6 L1720.2,166.6Z" fill="#f7f7f7" stroke="#1a5dc4" stroke-width="1.4" stroke-linejoin="round"/>
<path d="M1736.6,128.6 L1744.6,134.4 L1741.6,138.4 L1733.6,132.6Z" fill="#1a5dc4"/>
<path d="M1709.8,173.6 L1710.8,168.6 L1714.2,171Z" fill="#1a5dc4"/>
<rect x="1774" y="124" width="1" height="134" fill="#cdcdcd"/>
<path d="M1797.6,164.2 V135.1 H1835.8" fill="none" stroke="#333333" stroke-width="1.3"/>
<rect x="1802.2" y="139.9" width="36" height="27" fill="none" stroke="#333333" stroke-width="1.5"/>
<rect x="1805.2" y="143.1" width="30" height="20.4" fill="#f0f0f0" stroke="#808080" stroke-width="1.4"/>
<circle cx="1824.75" cy="157.7" r="10.4" fill="#fff"/>
<circle cx="1824.75" cy="157.7" r="9.1" fill="#f5f5f5" stroke="#1e88d6" stroke-width="1.4"/>
<path d="M1831.4,164.4 L1841,174" stroke="#fff" stroke-width="3.5"/><path d="M1831.2,164.2 L1841.2,174.2" stroke="#1e88d6" stroke-width="1.5"/>
<rect x="1860" y="124" width="1" height="134" fill="#cdcdcd"/>
<path d="M1878.95,242.70 L1886.10,250.70 L1893.25,242.70" fill="none" stroke="#262626" stroke-width="1.3"/>
<path d="M1819.9,295 H1833.1 L1826.5,302.1Z" fill="#777"/>
<path d="M1882.3,292.2 L1893.9,303.7 M1893.9,292.2 L1882.3,303.7" stroke="#777" stroke-width="3.3" stroke-linecap="round"/>
<rect x="1413.5" y="357.8" width="488.5" height="1" fill="#c8c8c8"/>
<rect x="1428.5" y="365.6" width="473" height="52" fill="#fff" stroke="#a6a6a6" stroke-width="1"/>
<rect x="1428.1" y="425.2" width="19.6" height="19.4" fill="#fcfcfc"/>
<path d="M1428.6,444.59999999999997 V425.7 H1447.6999999999998" fill="none" stroke="#6a6a6a" stroke-width="1"/>
<path d="M1446.8999999999999,425.2 V443.8 H1428.1" fill="none" stroke="#6a6a6a" stroke-width="1.6"/>
<rect x="1413.5" y="487" width="488.5" height="1" fill="#c8c8c8"/>
<rect x="1428.5" y="494.5" width="468" height="422" fill="#fff" stroke="#a0a0a0" stroke-width="1"/>
<rect x="1870.2" y="496.2" width="24.8" height="419" rx="7" fill="#f3f3f3"/>
<path d="M1876.6,511.6 L1883,503.6 L1889.4,511.6Z" fill="#707070" stroke="#707070" stroke-width="1" stroke-linejoin="round"/>
<rect x="1877" y="521" width="11.8" height="25.7" rx="5.9" fill="#727272"/>
<path d="M1876.6,899.3 L1883,907.5 L1889.4,899.3Z" fill="#707070" stroke="#707070" stroke-width="1" stroke-linejoin="round"/>
<path d="M1436.4,510.6 H1441.9 V505.4Z" fill="#555" stroke="#333" stroke-width="0.8" stroke-linejoin="round"/>
<path d="M1436.4,699.6 H1441.9 V694.4Z" fill="#555" stroke="#333" stroke-width="0.8" stroke-linejoin="round"/>
<rect x="1413.2" y="955.6" width="488.5" height="1" fill="#c8c8c8"/>
<rect x="1428.1" y="965.2" width="19.6" height="19.4" fill="#fcfcfc"/>
<path d="M1428.6,984.6 V965.7 H1447.6999999999998" fill="none" stroke="#6a6a6a" stroke-width="1"/>
<path d="M1446.8999999999999,965.2 V983.8000000000001 H1428.1" fill="none" stroke="#6a6a6a" stroke-width="1.6"/>
<rect x="1428.1" y="996" width="19.6" height="19.4" fill="#fcfcfc"/>
<path d="M1428.6,1015.4 V996.5 H1447.6999999999998" fill="none" stroke="#6a6a6a" stroke-width="1"/>
<path d="M1446.8999999999999,996 V1014.6 H1428.1" fill="none" stroke="#6a6a6a" stroke-width="1.6"/>
<path d="M1393.9,1056 V1053 H1397 M1410.8,1053 H1413.9 V1056 M1413.9,1069.2 V1072.3 H1410.8 M1397,1072.3 H1393.9 V1069.2" fill="none" stroke="#333" stroke-width="1.3"/>
<path d="M1398.9,1056.6 H1405.6 L1409.4,1060.4 V1068.9 H1398.9Z M1405.6,1056.6 V1060.4 H1409.4" fill="none" stroke="#333" stroke-width="1.3" stroke-linejoin="round"/>
<path d="M1504.1,1053.6 H1495.3 V1070 H1504.1 L1504.1,1071.2 L1504.1,1070 H1513 V1053.6 H1504.1Z M1504.1,1053.6 V1070" fill="none" stroke="#333" stroke-width="1.3"/>
<path d="M1497.6,1057 H1501.8 M1506.4,1057 H1510.6" stroke="#333" stroke-width="0.9"/>
<path d="M1497.6,1059.8 H1501.8 M1506.4,1059.8 H1510.6" stroke="#333" stroke-width="0.9"/>
<path d="M1497.6,1062.6 H1501.8 M1506.4,1062.6 H1510.6" stroke="#333" stroke-width="0.9"/>
<path d="M1497.6,1065.4 H1501.8 M1506.4,1065.4 H1510.6" stroke="#333" stroke-width="0.9"/>
<path d="M1497.6,1068 H1501.8 M1506.4,1068 H1510.6" stroke="#333" stroke-width="0.9"/>
<rect x="1535" y="1047" width="60" height="33" fill="#dedede"/>
<rect x="1556.9" y="1053.4" width="15" height="19.2" fill="none" stroke="#333" stroke-width="1.4"/>
<path d="M1559.6,1057.2 H1569.2" stroke="#333" stroke-width="1"/>
<path d="M1559.6,1060.2 H1569.2" stroke="#333" stroke-width="1"/>
<path d="M1559.6,1063.2 H1569.2" stroke="#333" stroke-width="1"/>
<path d="M1559.6,1066.2 H1569.2" stroke="#333" stroke-width="1"/>
<path d="M1559.6,1069 H1569.2" stroke="#333" stroke-width="1"/>
<path d="M1621,1072 H1615.1 V1053.1 H1634.9 V1059" fill="none" stroke="#333" stroke-width="1.3"/>
<path d="M1617.6,1056.6 H1632" stroke="#333" stroke-width="0.9"/>
<path d="M1617.6,1059.6 H1626" stroke="#333" stroke-width="0.9"/>
<path d="M1617.6,1062.6 H1621" stroke="#333" stroke-width="0.9"/>
<path d="M1617.6,1065.6 H1620" stroke="#333" stroke-width="0.9"/>
<path d="M1617.6,1068.6 H1620" stroke="#333" stroke-width="0.9"/>
<circle cx="1628.7" cy="1066.6" r="6.1" fill="#f3f3f3" stroke="#333" stroke-width="1.2"/>
<path d="M1622.6,1066.6 H1634.8 M1628.7,1060.5 V1072.7" stroke="#333" stroke-width="0.9"/><ellipse cx="1628.7" cy="1066.6" rx="2.6" ry="6.1" fill="none" stroke="#333" stroke-width="0.9"/>
<path d="M1662.6,1062.6 H1673.9" stroke="#333" stroke-width="1.1"/>
<rect x="1683.2" y="1062" width="147.3" height="1.4" fill="#5a5a5a"/>
<rect x="1752.6" y="1053.6" width="8.4" height="17.7" rx="1" fill="#5f5f5f"/>
<path d="M1839,1062.9 H1850.2 M1844.6,1057.2 V1068.5" stroke="#333" stroke-width="1.1"/>
<path d="M524.5,1059 V1054.5 H503.5" fill="none"/>
<path d="M509,1071.8 H503.6 V1054.4 H524.6 V1061" fill="none" stroke="#333" stroke-width="1.3"/><path d="M503.6,1058 H524.6" stroke="#333" stroke-width="1.1"/>
<path d="M506,1061.4 H511 M506,1064.4 H509.5 M506,1067.4 H509" stroke="#333" stroke-width="0.9"/>
<circle cx="518.4" cy="1066.4" r="5.6" fill="#f3f3f3" stroke="#333" stroke-width="1.3"/><circle cx="518.4" cy="1066.4" r="2.7" fill="#333"/>
<circle cx="560" cy="1055.8" r="2.5" fill="none" stroke="#333" stroke-width="1.3"/>
<path d="M551.4,1057.6 C552.2,1060.4 554.3,1061.2 556.3,1061.2 H563.8 C565.8,1061.2 567.9,1060.4 568.7,1057.6 M556.3,1061.2 V1066.2 C556.3,1068.2 553.6,1069.6 553.9,1071.6 C554.1,1072.9 555.6,1073.1 556.6,1072.3 M563.8,1061.2 V1064.6" fill="none" stroke="#333" stroke-width="1.3" stroke-linecap="round" stroke-linejoin="round"/>
<path d="M561.6,1068.6 L564.9,1072 L572.2,1064.8" fill="none" stroke="#333" stroke-width="1.3"/></svg>
<div class=t style="left:71.20px;top:28.35px;font-size:17.32px;line-height:17.32px;color:#1f1f1f;font-weight:400;font-family:'Liberation Sans';transform:scaleX(1.0150);">AutoSave</div>
<div class=t style="left:189.30px;top:29.41px;font-size:14.53px;line-height:14.53px;color:#5a5a5a;font-weight:400;font-family:'Liberation Sans';transform:scaleX(1.0817);">Off</div>
<div class=t style="left:279.87px;top:28.45px;font-size:17.32px;line-height:17.32px;color:#1f1f1f;font-weight:400;font-family:'Liberation Sans';transform:scaleX(1.0342);">Document1</div>
<div class=t style="left:383.90px;top:28.45px;font-size:17.32px;line-height:17.32px;color:#1f1f1f;font-weight:400;font-family:'Liberation Sans';transform:scaleX(1.0200);">-</div>
<div class=t style="left:400.70px;top:28.45px;font-size:17.32px;line-height:17.32px;color:#1f1f1f;font-weight:400;font-family:'Liberation Sans';transform:scaleX(1.0472);">Word</div>
<div class=t style="left:786.60px;top:29.11px;font-size:17.60px;line-height:17.60px;color:#5c5c5c;font-weight:400;font-family:'Liberation Sans';transform:scaleX(1.1028);">Search (Alt+Q)</div>
<div class=t style="left:1459.02px;top:28.85px;font-size:17.32px;line-height:17.32px;color:#1f1f1f;font-weight:400;font-family:'Liberation Sans';transform:scaleX(0.9811);">Edwin Bowles</div>
<div class=t style="left:1590.56px;top:30.66px;font-size:13.41px;line-height:13.41px;color:#ffffff;font-weight:400;font-family:'Liberation Sans';transform:scaleX(0.9450);">EB</div>
<div class=t style="left:31.46px;top:87.14px;font-size:18.16px;line-height:18.16px;color:#262626;font-weight:400;font-family:'Liberation Sans';transform:scaleX(1.0394);">File</div>
<div class=t style="left:99.59px;top:87.14px;font-size:18.16px;line-height:18.16px;color:#1f1f1f;font-weight:400;font-family:'Liberation Sans';transform:scaleX(1.1575);-webkit-text-stroke:0.45px #1f1f1f;">Home</div>
<div class=t style="left:184.44px;top:87.14px;font-size:18.16px;line-height:18.16px;color:#262626;font-weight:400;font-family:'Liberation Sans';transform:scaleX(1.0602);">Insert</div>
<div class=t style="left:262.70px;top:87.14px;font-size:18.16px;line-height:18.16px;color:#262626;font-weight:400;font-family:'Liberation Sans';transform:scaleX(1.0478);">Draw</div>
<div class=t style="left:336.41px;top:87.14px;font-size:18.16px;line-height:18.16px;color:#262626;font-weight:400;font-family:'Liberation Sans';transform:scaleX(1.0896);">Design</div>
<div class=t style="left:426.41px;top:87.14px;font-size:18.16px;line-height:18.16px;color:#262626;font-weight:400;font-family:'Liberation Sans';transform:scaleX(1.0950);">Layout</div>
<div class=t style="left:516.50px;top:87.14px;font-size:18.16px;line-height:18.16px;color:#262626;font-weight:400;font-family:'Liberation Sans';transform:scaleX(0.9951);">References</div>
<div class=t style="left:640.12px;top:87.14px;font-size:18.16px;line-height:18.16px;color:#262626;font-weight:400;font-family:'Liberation Sans';transform:scaleX(1.1265);">Mailings</div>
<div class=t style="left:743.49px;top:87.14px;font-size:18.16px;line-height:18.16px;color:#262626;font-weight:400;font-family:'Liberation Sans';transform:scaleX(1.0062);">Review</div>
<div class=t style="left:834.50px;top:87.14px;font-size:18.16px;line-height:18.16px;color:#262626;font-weight:400;font-family:'Liberation Sans';transform:scaleX(1.0153);">View</div>
<div class=t style="left:904.41px;top:87.14px;font-size:18.16px;line-height:18.16px;color:#262626;font-weight:400;font-family:'Liberation Sans';transform:scaleX(1.0901);">Developer</div>
<div class=t style="left:1024.41px;top:87.14px;font-size:18.16px;line-height:18.16px;color:#262626;font-weight:400;font-family:'Liberation Sans';transform:scaleX(1.0906);">Help</div>
<div class=t style="left:1093.47px;top:87.14px;font-size:18.16px;line-height:18.16px;color:#262626;font-weight:400;font-family:'Liberation Sans';transform:scaleX(1.0331);">RCM</div>
<div class=t style="left:1657.00px;top:86.64px;font-size:18.16px;line-height:18.16px;color:#1f1f1f;font-weight:400;font-family:'Liberation Sans';transform:scaleX(1.1041);-webkit-text-stroke:0.45px #1f1f1f;">Comments</div>
<div class=t style="left:1817.50px;top:86.64px;font-size:18.16px;line-height:18.16px;color:#ffffff;font-weight:400;font-family:'Liberation Sans';transform:scaleX(1.0193);-webkit-text-stroke:0.45px #ffffff;">Share</div>
<div class=t style="left:39.61px;top:245.08px;font-size:14.80px;line-height:14.80px;color:#3b3b3b;font-weight:400;font-family:'Liberation Sans';transform:scaleX(1.0866);">Undo</div>
<div class=t style="left:124.22px;top:184.89px;font-size:16.20px;line-height:16.20px;color:#262626;font-weight:400;font-family:'Liberation Sans';transform:scaleX(0.9779);">Paste</div>
<div class=t style="left:118.50px;top:244.08px;font-size:14.80px;line-height:14.80px;color:#3b3b3b;font-weight:400;font-family:'Liberation Sans';transform:scaleX(1.0585);">Clipboard</div>
<div class=t style="left:242.50px;top:145.47px;font-size:17.18px;line-height:17.18px;color:#262626;font-weight:400;font-family:'Liberation Sans';transform:scaleX(1.0160);">Times New Roman</div>
<div class=t style="left:431.95px;top:145.47px;font-size:17.18px;line-height:17.18px;color:#262626;font-weight:400;font-family:'Liberation Sans';transform:scaleX(1.0451);">11</div>
<div class=t style="left:431.45px;top:244.88px;font-size:14.80px;line-height:14.80px;color:#3b3b3b;font-weight:400;font-family:'Liberation Sans';transform:scaleX(1.0527);">Font</div>
<div class=t style="left:788.77px;top:244.48px;font-size:14.80px;line-height:14.80px;color:#3b3b3b;font-weight:400;font-family:'Liberation Sans';transform:scaleX(1.0284);">Paragraph</div>
<div class=t style="left:1219.30px;top:244.18px;font-size:14.80px;line-height:14.80px;color:#3b3b3b;font-weight:400;font-family:'Liberation Sans';transform:scaleX(0.9700);">Styles</div>
<div class=t style="left:1043.60px;top:167.19px;font-size:22.36px;line-height:22.36px;color:#000000;font-weight:400;font-family:'Liberation Serif';transform:scaleX(0.9729);">Normal</div>
<div class=t style="left:1187.70px;top:167.19px;font-size:22.36px;line-height:22.36px;color:#000000;font-weight:400;font-family:'Liberation Serif';transform:scaleX(0.9770);">No Spacing</div>
<div class=t style="left:1336.94px;top:165.86px;font-size:27.23px;line-height:27.23px;color:#4366a8;font-weight:400;font-family:'Liberation Sans';transform:scaleX(1.0318);">Heading 1</div>
<div class=t style="left:1534.13px;top:179.96px;font-size:16.48px;line-height:16.48px;color:#262626;font-weight:400;font-family:'Liberation Sans';transform:scaleX(1.0733);">Editing</div>
<div class=t style="left:1617.83px;top:183.16px;font-size:16.48px;line-height:16.48px;color:#262626;font-weight:400;font-family:'Liberation Sans';transform:scaleX(1.0739);">Dictate</div>
<div class=t style="left:1707.51px;top:183.16px;font-size:16.48px;line-height:16.48px;color:#262626;font-weight:400;font-family:'Liberation Sans';transform:scaleX(1.0932);">Editor</div>
<div class=t style="left:1794.72px;top:183.16px;font-size:16.48px;line-height:16.48px;color:#262626;font-weight:400;font-family:'Liberation Sans';transform:scaleX(0.9753);">Reuse</div>
<div class=t style="left:1800.53px;top:206.66px;font-size:16.48px;line-height:16.48px;color:#262626;font-weight:400;font-family:'Liberation Sans';transform:scaleX(0.9721);">Files</div>
<div class=t style="left:1627.00px;top:245.28px;font-size:14.80px;line-height:14.80px;color:#3b3b3b;font-weight:400;font-family:'Liberation Sans';transform:scaleX(1.0204);">Voice</div>
<div class=t style="left:1710.75px;top:245.28px;font-size:14.80px;line-height:14.80px;color:#3b3b3b;font-weight:400;font-family:'Liberation Sans';transform:scaleX(1.0470);">Editor</div>
<div class=t style="left:1778.51px;top:245.28px;font-size:14.80px;line-height:14.80px;color:#3b3b3b;font-weight:400;font-family:'Liberation Sans';transform:scaleX(0.9905);">Reuse Files</div>
<div class=t style="left:1411.58px;top:284.70px;font-size:31.56px;line-height:31.56px;color:#2262b5;font-weight:400;font-family:'Liberation Sans';transform:scaleX(0.9607);">Reveal Formatting</div>
<div class=t style="left:1413.50px;top:339.57px;font-size:15.64px;line-height:15.64px;color:#363636;font-weight:700;font-family:'Liberation Sans';transform:scaleX(1.1359);">Selected text</div>
<div class=t style="left:1440.94px;top:379.98px;font-size:22.96px;line-height:22.96px;color:#000000;font-weight:400;font-family:'Liberation Serif';transform:scaleX(0.9558);">Sample Text</div>
<div class=t style="left:1454.30px;top:429.98px;font-size:14.80px;line-height:14.80px;color:#444444;font-weight:400;font-family:'Liberation Sans';transform:scaleX(1.0522);">Compare to another selection</div>
<div class=t style="left:1412.35px;top:468.77px;font-size:15.64px;line-height:15.64px;color:#363636;font-weight:700;font-family:'Liberation Sans';transform:scaleX(1.1525);">Formatting of selected text</div>
<div class=t style="left:1450.43px;top:499.24px;font-size:15.08px;line-height:15.08px;color:#262626;font-weight:700;font-family:'Liberation Sans';transform:scaleX(1.0686);">Font</div>
<div class=t style="left:1450.50px;top:520.48px;font-size:14.80px;line-height:14.80px;color:#2e6db4;font-weight:400;font-family:'Liberation Sans';transform:scaleX(0.9991);">FONT</div>
<div class=t style="left:1467.20px;top:541.48px;font-size:14.80px;line-height:14.80px;color:#3a3a3a;font-weight:400;font-family:'Liberation Sans';transform:scaleX(1.0448);">(Default) Times New Roman</div>
<div class=t style="left:1466.04px;top:562.48px;font-size:14.80px;line-height:14.80px;color:#3a3a3a;font-weight:400;font-family:'Liberation Sans';transform:scaleX(1.1628);">11 pt</div>
<div class=t style="left:1450.51px;top:583.48px;font-size:14.80px;line-height:14.80px;color:#2e6db4;font-weight:400;font-family:'Liberation Sans';transform:scaleX(0.9882);">LANGUAGE</div>
<div class=t style="left:1466.19px;top:604.48px;font-size:14.80px;line-height:14.80px;color:#3a3a3a;font-weight:400;font-family:'Liberation Sans';transform:scaleX(1.0123);">English (Canada)</div>
<div class=t style="left:1451.50px;top:625.48px;font-size:14.80px;line-height:14.80px;color:#1a1a1a;font-weight:400;font-family:'Liberation Sans';transform:scaleX(0.9669);">CHARACTER OPTIONS:</div>
<div class=t style="left:1466.06px;top:646.48px;font-size:14.80px;line-height:14.80px;color:#3a3a3a;font-weight:400;font-family:'Liberation Sans';transform:scaleX(1.1370);">Highlight</div>
<div class=t style="left:1450.44px;top:688.24px;font-size:15.08px;line-height:15.08px;color:#262626;font-weight:700;font-family:'Liberation Sans';transform:scaleX(1.0590);">Paragraph</div>
<div class=t style="left:1451.50px;top:709.48px;font-size:14.80px;line-height:14.80px;color:#2e6db4;font-weight:400;font-family:'Liberation Sans';transform:scaleX(1.0036);">ALIGNMENT</div>
<div class=t style="left:1466.11px;top:730.48px;font-size:14.80px;line-height:14.80px;color:#3a3a3a;font-weight:400;font-family:'Liberation Sans';transform:scaleX(1.0904);">Left</div>
<div class=t style="left:1450.46px;top:751.48px;font-size:14.80px;line-height:14.80px;color:#2e6db4;font-weight:400;font-family:'Liberation Sans';transform:scaleX(1.0393);">INDENTATION</div>
<div class=t style="left:1466.15px;top:772.48px;font-size:14.80px;line-height:14.80px;color:#3a3a3a;font-weight:400;font-family:'Liberation Sans';transform:scaleX(1.0465);">Left:  0 cm</div>
<div class=t style="left:1466.15px;top:793.48px;font-size:14.80px;line-height:14.80px;color:#3a3a3a;font-weight:400;font-family:'Liberation Sans';transform:scaleX(1.0539);">Right:  0 cm</div>
<div class=t style="left:1451.50px;top:814.48px;font-size:14.80px;line-height:14.80px;color:#2e6db4;font-weight:400;font-family:'Liberation Sans';transform:scaleX(0.9909);">SPACING</div>
<div class=t style="left:1466.14px;top:835.48px;font-size:14.80px;line-height:14.80px;color:#3a3a3a;font-weight:400;font-family:'Liberation Sans';transform:scaleX(1.0554);">Before:  0 pt</div>
<div class=t style="left:1467.20px;top:856.48px;font-size:14.80px;line-height:14.80px;color:#3a3a3a;font-weight:400;font-family:'Liberation Sans';transform:scaleX(1.0726);">After:  8 pt</div>
<div class=t style="left:1466.13px;top:877.48px;font-size:14.80px;line-height:14.80px;color:#3a3a3a;font-weight:400;font-family:'Liberation Sans';transform:scaleX(1.0677);">Line spacing:  Multiple 1.08 li</div>
<div class=t style="left:1413.20px;top:937.77px;font-size:15.64px;line-height:15.64px;color:#363636;font-weight:700;font-family:'Liberation Sans';transform:scaleX(1.1225);">Options</div>
<div class=t style="left:1453.44px;top:969.88px;font-size:14.80px;line-height:14.80px;color:#3a3a3a;font-weight:400;font-family:'Liberation Sans';transform:scaleX(1.0577);">Distinguish style source</div>
<div class=t style="left:1454.50px;top:1000.88px;font-size:14.80px;line-height:14.80px;color:#3a3a3a;font-weight:400;font-family:'Liberation Sans';transform:scaleX(1.0764);">Show all formatting marks</div>
<div class=t style="left:9.41px;top:1055.99px;font-size:15.08px;line-height:15.08px;color:#363636;font-weight:400;font-family:'Liberation Sans';transform:scaleX(0.9902);">Page 1 of 1</div>
<div class=t style="left:115.60px;top:1055.99px;font-size:15.08px;line-height:15.08px;color:#363636;font-weight:400;font-family:'Liberation Sans';transform:scaleX(1.0487);">0 words</div>
<div class=t style="left:196.50px;top:1055.99px;font-size:15.08px;line-height:15.08px;color:#363636;font-weight:400;font-family:'Liberation Sans';transform:scaleX(0.9958);">English (Canada)</div>
<div class=t style="left:340.00px;top:1055.99px;font-size:15.08px;line-height:15.08px;color:#363636;font-weight:400;font-family:'Liberation Sans';transform:scaleX(0.9997);">Text Predictions: On</div>
<div class=t style="left:576.40px;top:1055.99px;font-size:15.08px;line-height:15.08px;color:#363636;font-weight:400;font-family:'Liberation Sans';transform:scaleX(1.0266);">Accessibility: Good to go</div>
<div class=t style="left:1418.42px;top:1056.24px;font-size:15.08px;line-height:15.08px;color:#363636;font-weight:400;font-family:'Liberation Sans';transform:scaleX(0.9818);">Focus</div>
<div class=t style="left:1868.28px;top:1056.24px;font-size:15.08px;line-height:15.08px;color:#363636;font-weight:400;font-family:'Liberation Sans';transform:scaleX(1.0227);">100%</div>
<div style='position:absolute;left:1451.5px;top:535.0px;width:39.2px;height:1px;background:#2e6db4'></div>
<div style='position:absolute;left:1451.5px;top:598.0px;width:80.4px;height:1px;background:#2e6db4'></div>
<div style='position:absolute;left:1451.5px;top:640.0px;width:160.3px;height:1px;background:#1a1a1a'></div>
<div style='position:absolute;left:1451.5px;top:724.0px;width:86.6px;height:1px;background:#2e6db4'></div>
<div style='position:absolute;left:1451.5px;top:766.0px;width:100.2px;height:1px;background:#2e6db4'></div>
<div style='position:absolute;left:1451.5px;top:829.0px;width:64.4px;height:1px;background:#2e6db4'></div>
</body></html>
